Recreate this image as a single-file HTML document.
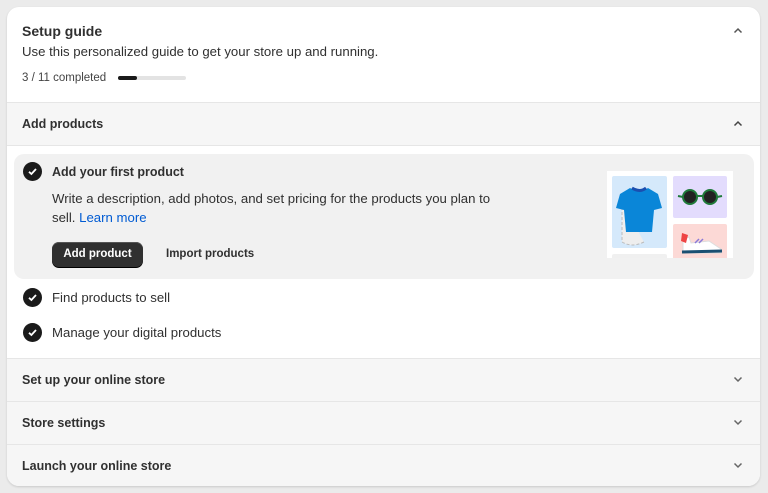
<!DOCTYPE html><html><head><style>
body{margin:0;width:768px;height:493px;background:#ebebeb;font-family:"Liberation Sans",sans-serif;color:#303030;overflow:hidden}
.card{position:absolute;left:7px;top:7px;width:753px;height:479px;background:#fff;border-radius:12px;overflow:hidden;box-shadow:0 1px 2px rgba(0,0,0,.15)}
.abs{position:absolute}
.h{font-size:13.5px;font-weight:bold;color:#303030}
.t{font-size:13.2px;color:#303030}
.sec{position:absolute;left:0;width:753px;height:42px;background:#f6f6f6;border-top:1px solid #e6e6e6}
.sec span{position:absolute;left:15px;top:14px;font-size:12.5px;font-weight:bold}
.chev{position:absolute;right:17px;top:17px;width:10px;height:7px}
.chk{position:absolute;width:19px;height:19px;border-radius:50%;background:#1a1a1a}
</style></head><body>
<div class="card">
<div class="abs h" style="left:15px;top:16px;font-size:14px">Setup guide</div>
<svg class="abs" style="left:726px;top:20px" width="10" height="7"><path d="M1.5 5.5L5 2L8.5 5.5" stroke="#555" stroke-width="1.5" fill="none"/></svg>
<div class="abs t" style="left:15px;top:37px">Use this personalized guide to get your store up and running.</div>
<div class="abs" style="left:15px;top:65px;font-size:11.5px;color:#444">3 / 11 completed</div>
<div class="abs" style="left:111px;top:69px;width:68px;height:4px;background:#e3e3e3;border-radius:2px"><div style="width:19px;height:4px;background:#1a1a1a;border-radius:2px"></div></div>
<div class="sec" style="top:95px"><span>Add products</span><svg class="chev" width="10" height="7"><path d="M1.5 5.5L5 2L8.5 5.5" stroke="#444" stroke-width="1.5" fill="none"/></svg></div>
<div class="abs" style="left:0;top:138px;width:753px;height:1px;background:#e6e6e6"></div>
<div class="abs" style="left:7px;top:147px;width:740px;height:125px;background:#f1f1f1;border-radius:10px"></div>
<div class="chk" style="left:16px;top:155px"><svg width="19" height="19"><path d="M6 9.8L8.4 12L13 7" stroke="#fff" stroke-width="1.8" fill="none"/></svg></div>
<div class="abs h" style="left:45px;top:158px;font-size:12.5px">Add your first product</div>
<div class="abs t" style="left:45px;top:182px;line-height:19px;width:450px">Write a description, add photos, and set pricing for the products you plan to sell. <span style="color:#005bd3">Learn more</span></div>
<div class="abs" style="left:45px;top:235px;width:91px;height:25px;background:#303030;border-radius:7px;box-shadow:0 1px 0 #000,inset 0 1px 0 #555;color:#fff;font-size:11.5px;font-weight:bold;line-height:25px;text-align:center">Add product</div>
<div class="abs" style="left:159px;top:241px;font-size:11.5px;font-weight:bold">Import products</div>
<div class="abs" style="left:600px;top:164px;width:126px;height:87px;background:#fff;overflow:hidden">
<div class="abs" style="left:5px;top:5px;width:55px;height:72px;background:#d5e9fb;border-radius:2px"></div>
<div class="abs" style="left:5px;top:83px;width:55px;height:10px;background:#f0f0f0;border-radius:2px"></div>
<div class="abs" style="left:66px;top:5px;width:54px;height:42px;background:#e3dcfd;border-radius:2px"></div>
<div class="abs" style="left:66px;top:53px;width:54px;height:42px;background:#fcd9d6;border-radius:2px"></div>
</div>
<svg class="abs" style="left:605px;top:175px" width="56" height="68"><path d="M10 20L10 60Q20 66 32 60" stroke="#bbb" stroke-dasharray="3 2" fill="#eee"/><path d="M18 6L8 12L4 26L12 28L14 50L40 50L42 28L50 26L46 12L36 6Q28 12 18 6Z" fill="#0a86d8"/><path d="M20 6Q28 11 34 6" stroke="#1a4fb0" stroke-width="3" fill="none"/></svg>
<svg class="abs" style="left:670px;top:180px" width="46" height="20"><circle cx="13" cy="10" r="7" fill="#222" stroke="#1f7a3a" stroke-width="2"/><circle cx="33" cy="10" r="7" fill="#222" stroke="#1f7a3a" stroke-width="2"/><path d="M1 9L6 10M40 10L45 9M20 9L26 9" stroke="#1f7a3a" stroke-width="2"/></svg>
<svg class="abs" style="left:672px;top:224px" width="46" height="26"><path d="M4 8L10 6L12 12L30 10L42 18L42 22L4 22Z" fill="#fff" stroke="#ddd"/><path d="M3 2L9 4L7 12L2 10Z" fill="#e44"/><path d="M16 12L20 8M20 12L24 8" stroke="#8a7ad8" stroke-width="1.5"/><path d="M3 21L43 20" stroke="#1b4f72" stroke-width="3"/></svg>
<div class="chk" style="left:16px;top:281px"><svg width="19" height="19"><path d="M6 9.8L8.4 12L13 7" stroke="#fff" stroke-width="1.8" fill="none"/></svg></div>
<div class="abs t" style="left:45px;top:283px">Find products to sell</div>
<div class="chk" style="left:16px;top:316px"><svg width="19" height="19"><path d="M6 9.8L8.4 12L13 7" stroke="#fff" stroke-width="1.8" fill="none"/></svg></div>
<div class="abs t" style="left:45px;top:318px">Manage your digital products</div>
<div class="sec" style="top:351px"><span>Set up your online store</span><svg class="chev" width="10" height="7"><path d="M1.5 1.5L5 5L8.5 1.5" stroke="#666" stroke-width="1.5" fill="none"/></svg></div>
<div class="sec" style="top:394px"><span>Store settings</span><svg class="chev" width="10" height="7"><path d="M1.5 1.5L5 5L8.5 1.5" stroke="#666" stroke-width="1.5" fill="none"/></svg></div>
<div class="sec" style="top:437px"><span>Launch your online store</span><svg class="chev" width="10" height="7"><path d="M1.5 1.5L5 5L8.5 1.5" stroke="#666" stroke-width="1.5" fill="none"/></svg></div>
</div>
</body></html>
